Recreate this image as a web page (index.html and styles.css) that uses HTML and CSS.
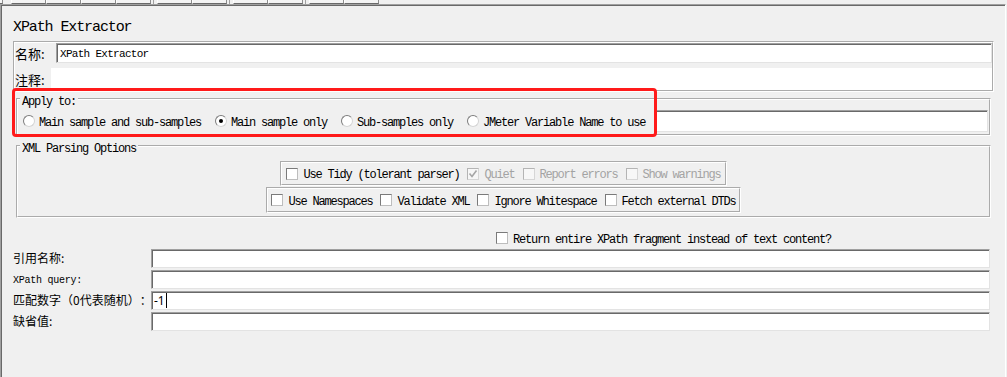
FILE: index.html
```html
<!DOCTYPE html>
<html>
<head>
<meta charset="utf-8">
<title>XPath Extractor</title>
<link rel="stylesheet" href="styles.css">
</head>
<body>
<div class="toolbar">
  <span class="tb-btn tb-first"></span>
  <span class="tb-group g1"><span class="tb-btn"></span><span class="tb-btn"></span><span class="tb-btn"></span><span class="tb-btn"></span></span>
  <span class="tb-sep"></span>
  <span class="tb-group"><span class="tb-btn"></span><span class="tb-btn"></span></span>
  <span class="tb-sep"></span>
  <span class="tb-group"><span class="tb-btn"></span><span class="tb-btn"></span></span>
  <span class="tb-sep"></span>
  <span class="tb-group"><span class="tb-btn"></span><span class="tb-btn"></span></span>
</div>
<div class="panel">
  <div class="title">XPath Extractor</div>
  <div class="name-box">
    <div class="name-row"><span class="nlabel">名称:</span><div class="field name-field">XPath Extractor</div></div>
    <div class="comment-row"><span class="nlabel clabel">注释:</span><div class="comment-area"></div></div>
  </div>
  <fieldset class="group apply">
    <legend>Apply to:</legend>
    <div class="radio-row">
      <label class="radio"><span class="rb"></span><span class="t">Main sample and sub-samples</span></label>
      <label class="radio"><span class="rb on"></span><span class="t">Main sample only</span></label>
      <label class="radio"><span class="rb"></span><span class="t">Sub-samples only</span></label>
      <label class="radio"><span class="rb"></span><span class="t">JMeter Variable Name to use</span></label>
      <div class="field var-field"></div>
    </div>
  </fieldset>
  <fieldset class="group xml">
    <legend>XML Parsing Options</legend>
    <div class="cb-box row1">
      <label class="check"><span class="cb"></span><span class="t">Use Tidy (tolerant parser)</span></label>
      <label class="check dis"><span class="cb"><svg width="10" height="10" viewBox="0 0 10 10"><path d="M1.5 4.5 L4 7.5 L8.5 1.5" fill="none" stroke="#a6a6a6" stroke-width="1.6"/></svg></span><span class="t">Quiet</span></label>
      <label class="check dis"><span class="cb"></span><span class="t">Report errors</span></label>
      <label class="check dis"><span class="cb"></span><span class="t">Show warnings</span></label>
    </div>
    <div class="cb-box row2">
      <label class="check"><span class="cb"></span><span class="t">Use Namespaces</span></label>
      <label class="check"><span class="cb"></span><span class="t">Validate XML</span></label>
      <label class="check"><span class="cb"></span><span class="t">Ignore Whitespace</span></label>
      <label class="check"><span class="cb"></span><span class="t">Fetch external DTDs</span></label>
    </div>
  </fieldset>
  <div class="return-row"><label class="check"><span class="cb"></span><span class="t">Return entire XPath fragment instead of text content?</span></label></div>
  <div class="fields">
    <span class="flabel">引用名称:</span><div class="field"></div>
    <span class="flabel mono">XPath query:</span><div class="field"></div>
    <span class="flabel">匹配数字（0代表随机）：</span><div class="field num">-1<span class="caret"></span></div>
    <span class="flabel">缺省值:</span><div class="field"></div>
  </div>
</div>
<div class="annot"></div>
</body>
</html>
```
FILE: styles.css
```css
* { box-sizing: border-box; }
html, body { margin: 0; padding: 0; }
body {
  width: 1007px;
  height: 377px;
  overflow: hidden;
  position: relative;
  background: #f0f0f0;
  color: #000;
  font-family: "Liberation Mono", monospace;
  font-size: 12px;
  letter-spacing: -1.2px;
}

/* toolbar stubs */
.toolbar { height: 4px; display: flex; align-items: flex-start; }
.tb-group { display: flex; }
.tb-btn {
  display: block;
  width: 35px;
  height: 4px;
  background: #f4f4f4;
  border-left: 1px solid #ffffff;
  border-right: 1px solid #8c8c8c;
  border-bottom: 1px solid #696969;
}
.tb-first { width: 3px; border-left: 0; }
.g1 { margin-left: 8px; }
.tb-sep { display: block; width: 1px; height: 4px; background: #a0a0a0; margin: 0 3px 0 2px; }

/* main panel */
.panel {
  width: 1006px;
  height: 373px;
  border-top: 1px solid #a0a0a0;
  border-left: 1px solid #a0a0a0;
  border-right: 1px solid #ffffff;
  box-shadow: inset 1px 1px 0 #696969;
  padding: 1px 0 0 2px;
}
.title {
  margin: 12px 0 0 10px;
  height: 20px;
  line-height: 20px;
  font-size: 15px;
  letter-spacing: -1.1px;
}

.field {
  background: #fff;
  border: 1px solid;
  border-color: #a0a0a0 #e3e3e3 #e3e3e3 #a0a0a0;
  box-shadow: inset 1px 1px 0 #696969;
}

.name-box {
  margin: 3px 0 0 10px;
  width: 981px;
  border: 2px groove #ffffff;
}
.name-row { display: flex; height: 20px; align-items: center; }
.nlabel {
  font-family: "Noto Sans CJK SC", sans-serif;
  font-size: 13px;
  letter-spacing: 0;
  width: 41px;
  flex: none;
}
.name-field {
  flex: 1;
  height: 20px;
  font-size: 11px;
  letter-spacing: -0.7px;
  line-height: 18px;
  padding: 1px 0 0 3px;
}
.comment-row { display: flex; align-items: center; padding-top: 5px; }
.clabel { width: 36px; }
.comment-area { flex: 1; height: 22px; background: #fff; }

/* group boxes */
fieldset.group {
  margin: 0 0 0 13px;
  width: 975px;
  min-width: 0;
  border: 2px groove #ffffff;
}
fieldset.group legend {
  font-size: 12px;
  line-height: 12px;
  padding: 7px 2px 0;
}
.apply { margin-top: -3px !important; padding: 2px 1px 2px 5px; }
.apply legend { margin-left: -3px; }
.xml { margin-top: 0 !important; padding: 6px 0 3px 0; display: flex; flex-direction: column; align-items: center; }
.xml legend { margin-left: 2px; }

.t { line-height: 12px; padding-top: 3px; }

.radio-row { display: flex; align-items: center; height: 22px; }
.radio { display: inline-flex; align-items: center; white-space: nowrap; }
.radio + .radio { margin-left: 14px; }
.rb {
  width: 12px;
  height: 12px;
  margin-right: 4px;
  border-radius: 50%;
  border: 1px solid;
  border-color: #7c7c7c #d4d4d4 #d4d4d4 #7c7c7c;
  background: #fff;
  display: flex;
  align-items: center;
  justify-content: center;
}
.rb.on::after { content: ""; width: 4px; height: 4px; border-radius: 50%; background: #000; }
.var-field { flex: 1; height: 22px; margin-left: 9px; }

.cb-box {
  display: flex;
  align-items: center;
  gap: 8px;
  border: 2px groove #ffffff;
}
.row1 { height: 25px; padding: 0 4px; margin-bottom: 1px; }
.row2 { height: 26px; padding: 0 3px; }
.check { display: inline-flex; align-items: center; white-space: nowrap; }
.cb {
  width: 12px;
  height: 12px;
  margin-right: 5px;
  flex: none;
  border: 1px solid;
  border-color: #7a7a7a #bdbdbd #bdbdbd #7a7a7a;
  background: #fff;
  display: flex;
  align-items: center;
  justify-content: center;
}
.dis { color: #a3a3a3; }
.dis .cb { border-color: #b4b4b4 #d6d6d6 #d6d6d6 #b4b4b4; background: #f7f7f7; }

.return-row { margin-top: 14px; height: 12px; display: flex; align-items: center; padding-left: 493px; }

.fields {
  margin: 5px 0 0 10px;
  width: 977px;
  display: grid;
  grid-template-columns: 138px 1fr;
  grid-auto-rows: 19px;
  row-gap: 2px;
  align-items: center;
}
.flabel {
  font-family: "Noto Sans CJK SC", sans-serif;
  font-size: 12px;
  letter-spacing: 0;
  line-height: 16px;
  padding-bottom: 1px;
  white-space: nowrap;
  text-spacing-trim: space-all;
}
.flabel.mono { font-family: "Liberation Mono", monospace; font-size: 10px; letter-spacing: -0.25px; line-height: 12px; padding: 2px 0 0; }
.fields .field { height: 19px; }
.num {
  font-family: "Noto Sans", sans-serif;
  font-size: 12px;
  letter-spacing: 0;
  line-height: 17px;
  padding-left: 2px;
  display: flex;
  align-items: center;
}
.caret { display: inline-block; width: 1px; height: 15px; background: #000; margin-left: 1px; }

.annot {
  position: absolute;
  left: 12px;
  top: 88px;
  width: 645px;
  height: 49px;
  border: 3px solid #ff1a1a;
  border-radius: 4px;
}
```
